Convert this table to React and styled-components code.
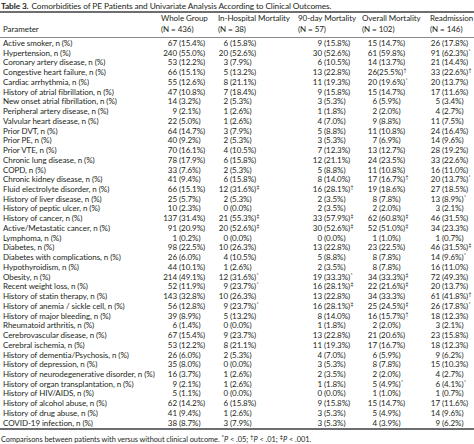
import React from 'react';
import styled, { createGlobalStyle } from 'styled-components';

const GlobalStyle = createGlobalStyle`
  html, body {
    margin: 0;
    padding: 0;
    background: #ffffff;
  }
  body {
    font-family: Lato, "Liberation Sans", sans-serif;
    color: #231f20;
  }
`;

const Page = styled.div`
  width: 474px;
  height: 444px;
  overflow: hidden;
  background: #ffffff;
`;

const Caption = styled.div`
  height: 11px;
  padding-left: 1px;
  font-size: 8.3px;
  line-height: 13px;
  letter-spacing: -0.1px;
  white-space: nowrap;

  b {
    font-weight: 700;
    margin-right: 3px;
  }
`;

const Table = styled.table`
  width: 474px;
  border-collapse: collapse;
  table-layout: fixed;
  border-top: 2px solid #6d6e70;
  border-bottom: 2px solid #6d6e70;
  font-size: 8px;
  letter-spacing: -0.06px;
`;

const HeadRow = styled.tr`
  border-bottom: 1px solid #8a8b8d;
`;

const HeadCell = styled.th`
  font-weight: 400;
  text-align: left;
  vertical-align: bottom;
  padding: 0 0 2px ${p => p.$pad || 3}px;
  height: 21px;
  line-height: 11px;
  white-space: nowrap;
`;

const Row = styled.tr`
  height: 9.74px;

  &:first-child td {
    padding-top: 1px;
  }
`;

const ParamCell = styled.td`
  padding: 0 0 0 3px;
  line-height: 9.74px;
  white-space: nowrap;
`;

const ValueCell = styled.td`
  padding: 0 0 0 ${p => p.$pad || 3}px;
  line-height: 9.74px;
  white-space: pre;
`;

const Count = styled.span`
  display: inline-block;
  width: ${p => p.$w}px;
  text-align: right;
`;

const Mark = styled.sup`
  font-size: 5px;
  line-height: 0;
  vertical-align: 3px;
  margin-left: 0.5px;
`;

const Footnote = styled.div`
  padding-left: 1px;
  font-size: 7.4px;
  line-height: 14px;
  letter-spacing: -0.05px;
  white-space: nowrap;

  i {
    font-style: italic;
  }
`;

const columns = [
  { title: 'Whole Group', n: '(N = 436)', width: 57, pad: 3, countW: 16 },
  { title: 'In-Hospital Mortality', n: '(N = 38)', width: 80, pad: 3, countW: 10 },
  { title: '90-day Mortality', n: '(N = 57)', width: 64, pad: 3, countW: 24 },
  { title: 'Overall Mortality', n: '(N = 102)', width: 68, pad: 3, countW: 15 },
  { title: 'Readmission', n: '(N = 146)', width: 47, pad: 3, countW: 10 },
];

const rows = [
  ['Active smoker, n (%)', '67 (15.4%)', '6 (15.8%)', '9 (15.8%)', '15 (14.7%)', '26 (17.8%)'],
  ['Hypertension, n (%)', '240 (55.0%)', '20 (52.6%)', '30 (52.6%)', '61 (59.8%)', '91 (62.3%)*'],
  ['Coronary artery disease, n (%)', '53 (12.2%)', '3 (7.9%)', '6 (10.5%)', '14 (13.7%)', '21 (14.4%)'],
  ['Congestive heart failure, n (%)', '66 (15.1%)', '5 (13.2%)', '13 (22.8%)', '26(25.5%)†', '33 (22.6%)†'],
  ['Cardiac arrhythmia, n (%)', '55 (12.6%)', '8 (21.1%)', '11 (19.3%)', '20 (19.6%)*', '20 (13.7%)'],
  ['History of atrial fibrillation, n (%)', '47 (10.8%)', '7 (18.4%)', '9 (15.8%)', '15 (14.7%)', '17 (11.6%)'],
  ['New onset atrial fibrillation, n (%)', '14 (3.2%)', '2 (5.3%)', '3 (5.3%)', '6 (5.9%)', '5 (3.4%)'],
  ['Peripheral artery disease, n (%)', '9 (2.1%)', '1 (2.6%)', '1 (1.8%)', '2 (2.0%)', '4 (2.7%)'],
  ['Valvular heart disease, n (%)', '22 (5.0%)', '1 (2.6%)', '4 (7.0%)', '9 (8.8%)', '11 (7.5%)'],
  ['Prior DVT, n (%)', '64 (14.7%)', '3 (7.9%)', '5 (8.8%)', '11 (10.8%)', '24 (16.4%)'],
  ['Prior PE, n (%)', '40 (9.2%)', '2 (5.3%)', '3 (5.3%)', '7 (6.9%)', '14 (9.6%)'],
  ['Prior VTE, n (%)', '70 (16.1%)', '4 (10.5%)', '7 (12.3%)', '13 (12.7%)', '28 (19.2%)'],
  ['Chronic lung disease, n (%)', '78 (17.9%)', '6 (15.8%)', '12 (21.1%)', '24 (23.5%)', '33 (22.6%)'],
  ['COPD, n (%)', '33 (7.6%)', '2 (5.3%)', '5 (8.8%)', '11 (10.8%)', '16 (11.0%)'],
  ['Chronic kidney disease, n (%)', '41 (9.4%)', '6 (15.8%)', '8 (14.0%)', '17 (16.7%)†', '20 (13.7%)*'],
  ['Fluid electrolyte disorder, n (%)', '66 (15.1%)', '12 (31.6%)‡', '16 (28.1%)†', '19 (18.6%)', '27 (18.5%)'],
  ['History of liver disease, n (%)', '25 (5.7%)', '2 (5.3%)', '2 (3.5%)', '8 (7.8%)', '13 (8.9%)*'],
  ['History of peptic ulcer, n (%)', '10 (2.3%)', '0 (0.0%)', '2 (3.5%)', '2 (2.0%)', '3 (2.1%)'],
  ['History of cancer, n (%)', '137 (31.4%)', '21 (55.3%)‡', '33 (57.9%)‡', '62 (60.8%)‡', '46 (31.5%)'],
  ['Active/Metastatic cancer, n (%)', '91 (20.9%)', '20 (52.6%)‡', '30 (52.6%)‡', '52 (51.0%)‡', '34 (23.3%)'],
  ['Lymphoma, n (%)', '1 (0.2%)', '0 (0.0%)', '0 (0.0%)', '1 (1.0%)', '1 (0.7%)'],
  ['Diabetes, n (%)', '98 (22.5%)', '10 (26.3%)', '13 (22.8%)', '23 (22.5%)', '46 (31.5%)‡'],
  ['Diabetes with complications, n (%)', '26 (6.0%)', '4 (10.5%)', '5 (8.8%)', '8 (7.8%)', '14 (9.6%)*'],
  ['Hypothyroidism, n (%)', '44 (10.1%)', '1 (2.6%)', '2 (3.5%)', '8 (7.8%)', '16 (11.0%)'],
  ['Obesity, n (%)', '214 (49.1%)', '12 (31.6%)*', '19 (33.3%)*', '34 (33.3%)‡', '72 (49.3%)'],
  ['Recent weight loss, n (%)', '52 (11.9%)', '9 (23.7%)*', '16 (28.1%)‡', '22 (21.6%)‡', '20 (13.7%)'],
  ['History of statin therapy, n (%)', '143 (32.8%)', '10 (26.3%)', '13 (22.8%)', '34 (33.3%)', '61 (41.8%)†'],
  ['History of anemia / sickle cell, n (%)', '56 (12.8%)', '9 (23.7%)*', '16 (28.1%)‡', '25 (24.5%)‡', '26 (17.8%)*'],
  ['History of major bleeding, n (%)', '39 (8.9%)', '5 (13.2%)', '8 (14.0%)', '16 (15.7%)†', '18 (12.3%)'],
  ['Rheumatoid arthritis, n (%)', '6 (1.4%)', '0 (0.0%)', '1 (1.8%)', '2 (2.0%)', '3 (2.1%)'],
  ['Cerebrovascular disease, n (%)', '67 (15.4%)', '9 (23.7%)', '13 (22.8%)', '21 (20.6%)', '23 (15.8%)'],
  ['Cerebral ischemia, n (%)', '53 (12.2%)', '8 (21.1%)', '11 (19.3%)', '17 (16.7%)', '18 (12.3%)'],
  ['History of dementia/Psychosis, n (%)', '26 (6.0%)', '2 (5.3%)', '4 (7.0%)', '6 (5.9%)', '9 (6.2%)'],
  ['History of depression, n (%)', '35 (8.0%)', '0 (0.0%)', '3 (5.3%)', '8 (7.8%)', '15 (10.3%)'],
  ['History of neurodegenerative disorder, n (%)', '16 (3.7%)', '1 (2.6%)', '2 (3.5%)', '2 (2.0%)', '4 (2.7%)'],
  ['History of organ transplantation, n (%)', '9 (2.1%)', '1 (2.6%)', '1 (1.8%)', '5 (4.9%)*', '6 (4.1%)*'],
  ['History of HIV/AIDS, n (%)', '5 (1.1%)', '0 (0.0%)', '0 (0.0%)', '1 (1.0%)', '1 (0.7%)'],
  ['History of alcohol abuse, n (%)', '62 (14.2%)', '6 (15.8%)', '9 (15.8%)', '15 (14.7%)', '17 (11.6%)'],
  ['History of drug abuse, n (%)', '41 (9.4%)', '1 (2.6%)', '3 (5.3%)', '5 (4.9%)', '14 (9.6%)'],
  ['COVID-19 infection, n (%)', '38 (8.7%)', '3 (7.9%)', '3 (5.3%)', '4 (3.9%)', '9 (6.2%)'],
];

function Value({ text, countW }) {
  const m = text.match(/^(\d+)(\s?\(.*?\))([*†‡]?)$/);
  if (!m) return text;
  return (
    <>
      <Count $w={countW}>{m[1]}</Count>
      {m[2]}
      {m[3] && <Mark>{m[3]}</Mark>}
    </>
  );
}

export default function App() {
  return (
    <Page>
      <GlobalStyle />
      <Caption>
        <b>Table 3.</b>Comorbidities of PE Patients and Univariate Analysis According to Clinical Outcomes.
      </Caption>
      <Table>
        <colgroup>
          <col style={{ width: 158 }} />
          {columns.map(c => (
            <col key={c.title} style={{ width: c.width }} />
          ))}
        </colgroup>
        <thead>
          <HeadRow>
            <HeadCell>Parameter</HeadCell>
            {columns.map(c => (
              <HeadCell key={c.title} $pad={c.pad}>
                {c.title}
                <br />
                {c.n}
              </HeadCell>
            ))}
          </HeadRow>
        </thead>
        <tbody>
          {rows.map(r => (
            <Row key={r[0]}>
              <ParamCell>{r[0]}</ParamCell>
              {r.slice(1).map((v, i) => (
                <ValueCell key={i} $pad={columns[i].pad}>
                  <Value text={v} countW={columns[i].countW} />
                </ValueCell>
              ))}
            </Row>
          ))}
        </tbody>
      </Table>
      <Footnote>
        Comparisons between patients with versus without clinical outcome. <sup>*</sup><i>P</i> &lt; .05;{' '}
        <sup>†</sup><i>P</i> &lt; .01; <sup>‡</sup><i>P</i> &lt; .001.
      </Footnote>
    </Page>
  );
}
